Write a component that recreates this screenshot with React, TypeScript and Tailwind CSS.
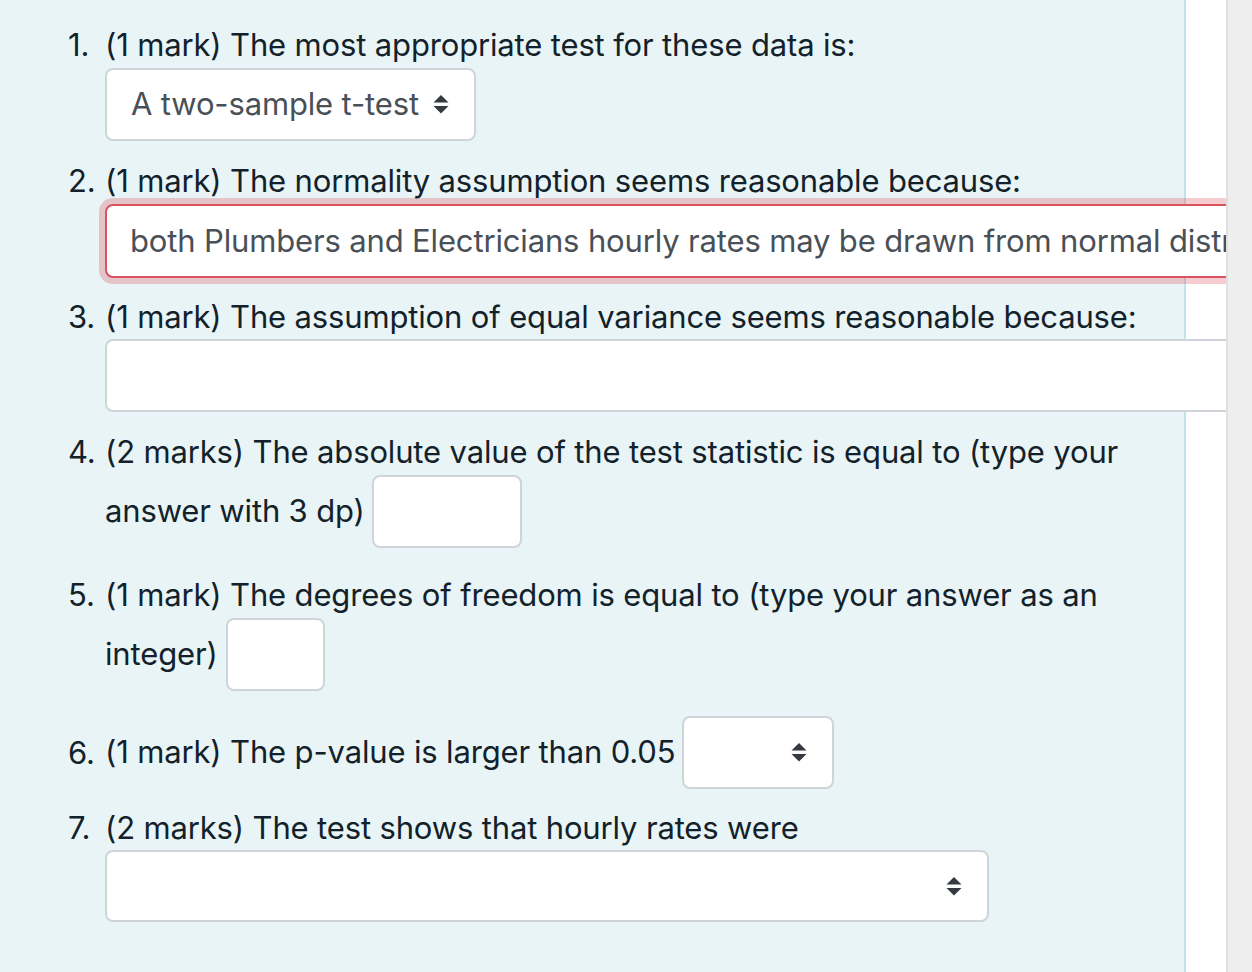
import React from "react";

function Arrows() {
  return (
    <svg width="16" height="19" viewBox="0 0 16 19" className="shrink-0">
      <path d="M8 0 L15.5 7.5 L0.5 7.5 Z" fill="#343a40" />
      <path d="M0.5 11 L15.5 11 L8 18.5 Z" fill="#343a40" />
    </svg>
  );
}

function Item({ n, children, className = "", tall = false }: { n: number; children: React.ReactNode; className?: string; tall?: boolean }) {
  return (
    <div className={"flex " + className}>
      <div className={"w-[37px] shrink-0 " + (tall ? "leading-[73px]" : "leading-[45px]")}>{n}.</div>
      <div className="flex-1 min-w-0">{children}</div>
    </div>
  );
}

export default function App() {
  return (
    <div className="flex w-[1252px] h-[972px] overflow-hidden" style={{ fontFamily: "Inter, 'Noto Sans', sans-serif" }}>
      <div className="w-[1226px] h-full overflow-hidden bg-white shrink-0">
        <div className="w-[1186px] h-full bg-[#e9f4f6] border-r-2 border-[#c3e2ea] pl-[68px] pt-[22px] text-[31px] text-[#13222a] tracking-[-0.15px]">
          <Item n={1} className="mb-[17px]">
            <div className="leading-[45px]">(1 mark) The most appropriate test for these data is:</div>
            <div className="mt-[1px] inline-flex items-center h-[73px] pl-[24px] pr-[25px] gap-[14px] bg-white border-2 border-[#ced4da] rounded-[8px] text-[#495057]">
              <span>A two-sample t-test</span>
              <Arrows />
            </div>
          </Item>
          <Item n={2} className="mb-[16px]">
            <div className="leading-[45px]">(1 mark) The normality assumption seems reasonable because:</div>
            <div className="mt-[1px] w-[1200px] h-[74px] flex items-center pl-[23px] bg-white border-2 border-[#d9535f] rounded-[8px] shadow-[0_0_0_6px_rgba(220,53,69,0.25)] text-[#495057] whitespace-nowrap overflow-hidden">
              both Plumbers and Electricians hourly rates may be drawn from normal distributions
            </div>
          </Item>
          <Item n={3} className="mb-[17px]">
            <div className="leading-[45px]">(1 mark) The assumption of equal variance seems reasonable because:</div>
            <div className="w-[1200px] h-[73px] bg-white border-2 border-[#ced4da] rounded-[8px]" />
          </Item>
          <Item n={4} className="mb-[24px]">
            <div className="leading-[45px]">(2 marks) The absolute value of the test statistic is equal to (type your</div>
            <div className="mt-[1px] flex items-center h-[73px]">
              <span>answer with 3 dp)</span>
              <div className="ml-[7px] w-[150px] h-[73px] bg-white border-2 border-[#ced4da] rounded-[8px]" />
            </div>
          </Item>
          <Item n={5} className="mb-[25px]">
            <div className="leading-[45px]">(1 mark) The degrees of freedom is equal to (type your answer as an</div>
            <div className="mt-[1px] flex items-center h-[73px]">
              <span>integer)</span>
              <div className="ml-[8px] w-[99px] h-[73px] bg-white border-2 border-[#ced4da] rounded-[8px]" />
            </div>
          </Item>
          <Item n={6} className="mb-[16px]" tall>
            <div className="flex items-center h-[73px]">
              <span>(1 mark) The p-value is larger than 0.05</span>
              <div className="ml-[7px] w-[152px] h-[73px] flex items-center justify-end pr-[25px] bg-white border-2 border-[#ced4da] rounded-[8px]">
                <Arrows />
              </div>
            </div>
          </Item>
          <Item n={7}>
            <div className="leading-[45px]">(2 marks) The test shows that hourly rates were</div>
            <div className="w-[884px] h-[72px] flex items-center justify-end pr-[25px] bg-white border-2 border-[#ced4da] rounded-[8px]">
              <Arrows />
            </div>
          </Item>
        </div>
      </div>
      <div className="flex-1 h-full bg-[#eeeeee] border-l-2 border-[#e0e0e0]" />
    </div>
  );
}
